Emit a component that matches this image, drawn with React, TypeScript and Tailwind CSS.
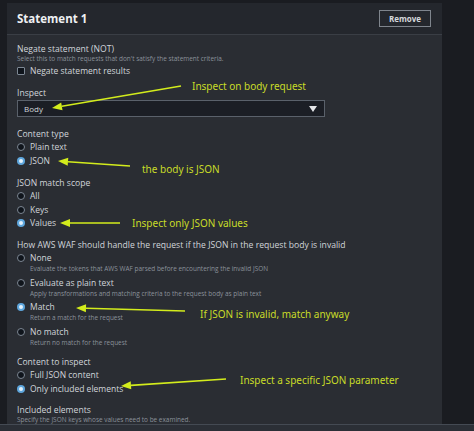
import React from 'react';

type Opt = { label: string; desc?: string; checked?: boolean };

const Radio = ({ checked }: { checked?: boolean }) =>
  checked ? (
    <span className="flex h-[8px] w-[8px] shrink-0 items-center justify-center rounded-full bg-[#5ea6dc]">
      <span className="h-[4px] w-[4px] rounded-full bg-[#e3f1fb]" />
    </span>
  ) : (
    <span className="h-[8px] w-[8px] shrink-0 rounded-full border border-[#7d8793] bg-[#0f141b]" />
  );

const Label = ({ children }: { children: React.ReactNode }) => (
  <div className="h-[10px] text-[8.6px] leading-[10px] text-[#d1d5da]">{children}</div>
);

const Desc = ({ children }: { children: React.ReactNode }) => (
  <div className="h-[9px] text-[6.45px] leading-[9px] text-[#8b929b]">{children}</div>
);

const RadioRow = ({ opt }: { opt: Opt }) => (
  <div className="flex h-[13.5px] items-center gap-[5px]">
    <Radio checked={opt.checked} />
    <span className="text-[8.5px] leading-[10px] text-[#d1d5da]">{opt.label}</span>
  </div>
);

const RadioBlock = ({ opt }: { opt: Opt }) => (
  <div>
    <div className="flex h-[12px] items-center gap-[5px]">
      <Radio checked={opt.checked} />
      <span className="text-[8.5px] leading-[10px] text-[#d1d5da]">{opt.label}</span>
    </div>
    <div className="pl-[13px]">
      <Desc>{opt.desc}</Desc>
    </div>
  </div>
);

const notes = [
  { text: 'Inspect on body request', x: 192, y: 86 },
  { text: 'the body is JSON', x: 142, y: 169 },
  { text: 'Inspect only JSON values', x: 132, y: 223 },
  { text: 'If JSON is invalid, match anyway', x: 200, y: 314 },
  { text: 'Inspect a specific JSON parameter', x: 240, y: 380 },
];

// tail -> tip
const arrows = [
  [181, 86, 52, 108],
  [130, 166, 58, 161],
  [120, 223, 60, 223],
  [185, 311, 76, 308],
  [226, 379, 121, 386],
];

const Arrow = ({ a }: { a: number[] }) => {
  const [x1, y1, x2, y2] = a;
  const ang = Math.atan2(y2 - y1, x2 - x1);
  const len = 10;
  const w = 4;
  const bx = x2 - Math.cos(ang) * len;
  const by = y2 - Math.sin(ang) * len;
  const px = -Math.sin(ang) * w;
  const py = Math.cos(ang) * w;
  return (
    <g>
      <line x1={x1} y1={y1} x2={bx} y2={by} stroke="#d3ec1c" strokeWidth={1.6} />
      <polygon points={`${x2},${y2} ${bx + px},${by + py} ${bx - px},${by - py}`} fill="#d3ec1c" />
    </g>
  );
};

export default function App() {
  return (
    <div
      className="relative flex h-[431px] w-[474px] flex-col overflow-hidden bg-[#1a1c21]"
      style={{ fontFamily: '"Open Sans", "Noto Sans", sans-serif' }}
    >
      <div className="flex flex-1 pl-[7px] pt-[3px]">
        <div className="flex w-[435px] flex-col bg-[#2a2d33]">
          {/* header */}
          <div className="flex h-[32px] items-center justify-between border-b border-[#3a3e45] bg-[#24272d] pl-[10px] pr-[11px]">
            <span className="text-[11.5px] font-bold text-[#eef0f2]">Statement 1</span>
            <button className="h-[17px] w-[52px] border border-[#7f858d] text-[8px] font-bold text-[#d5d8dc]">
              Remove
            </button>
          </div>

          <div className="flex flex-col pl-[10px] pt-[9px]">
            <Label>Negate statement (NOT)</Label>
            <Desc>Select this to match requests that don't satisfy the statement criteria.</Desc>
            <div className="mt-[1.5px] flex h-[13px] items-center gap-[5px]">
              <span className="h-[8px] w-[8px] rounded-[1px] border border-[#7d8793] bg-[#0f141b]" />
              <span className="text-[8.5px] text-[#d1d5da]">Negate statement results</span>
            </div>

            <div className="mt-[10.5px]">
              <Label>Inspect</Label>
            </div>
            <div className="mt-[2px] flex h-[17px] w-[308px] items-center justify-between border border-[#5a616b] bg-[#1b1e25] pl-[6px] pr-[7px]">
              <span className="text-[8px] text-[#d1d5da]">Body</span>
              <svg width="8" height="6" viewBox="0 0 8 6">
                <polygon points="0,0 8,0 4,6" fill="#e4e6e9" />
              </svg>
            </div>

            <div className="mt-[12px]">
              <Label>Content type</Label>
            </div>
            <div className="mt-[1.5px]">
              <RadioRow opt={{ label: 'Plain text' }} />
              <RadioRow opt={{ label: 'JSON', checked: true }} />
            </div>

            <div className="mt-[10px]">
              <Label>JSON match scope</Label>
            </div>
            <div className="mt-[2px]">
              <RadioRow opt={{ label: 'All' }} />
              <RadioRow opt={{ label: 'Keys' }} />
              <RadioRow opt={{ label: 'Values', checked: true }} />
            </div>

            <div className="mt-[10px]">
              <Label>How AWS WAF should handle the request if the JSON in the request body is invalid</Label>
            </div>
            <div className="mt-[2px] flex flex-col gap-[3.7px]">
              <RadioBlock opt={{ label: 'None', desc: 'Evaluate the tokens that AWS WAF parsed before encountering the invalid JSON' }} />
              <RadioBlock opt={{ label: 'Evaluate as plain text', desc: 'Apply transformations and matching criteria to the request body as plain text' }} />
              <RadioBlock opt={{ label: 'Match', desc: 'Return a match for the request', checked: true }} />
              <RadioBlock opt={{ label: 'No match', desc: 'Return no match for the request' }} />
            </div>

            <div className="mt-[10px]">
              <Label>Content to inspect</Label>
            </div>
            <div className="mt-[1.5px]">
              <RadioRow opt={{ label: 'Full JSON content' }} />
              <RadioRow opt={{ label: 'Only included elements', checked: true }} />
            </div>

            <div className="mt-[9.5px]">
              <Label>Included elements</Label>
            </div>
            <Desc>Specify the JSON keys whose values need to be examined.</Desc>
          </div>
        </div>
      </div>
      <div className="h-[7px] border-t border-[#444a53] bg-[#2b2f36]" />

      {/* annotations */}
      <svg className="pointer-events-none absolute left-0 top-0" width="474" height="431">
        {arrows.map((a, i) => (
          <Arrow key={i} a={a} />
        ))}
      </svg>
      {notes.map((n) => (
        <div
          key={n.text}
          className="absolute whitespace-nowrap text-[10px] leading-[14px] text-[#c9dc28]"
          style={{ left: n.x, top: n.y - 7, fontFamily: '"Noto Sans", "DejaVu Sans", sans-serif' }}
        >
          {n.text}
        </div>
      ))}
    </div>
  );
}
